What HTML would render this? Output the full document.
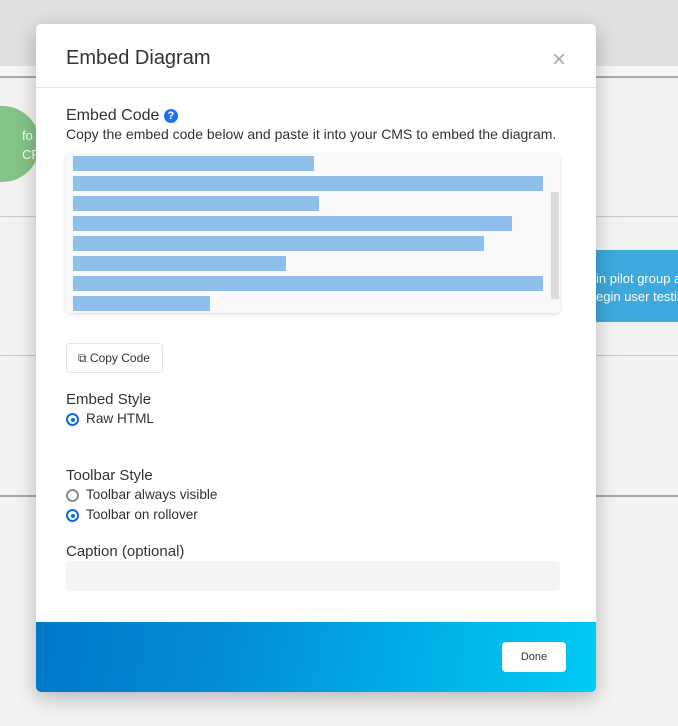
<!DOCTYPE html>
<html><head><style>
*{box-sizing:border-box;margin:0;padding:0}
body{width:678px;height:726px;overflow:hidden;background:#f3f3f3;font-family:"Liberation Sans",sans-serif;position:relative;color:#333}
.a{position:absolute}
.sel{position:absolute;left:73px;height:15px;background:#8fc0ec}
.radio{position:absolute;width:13px;height:13px;border-radius:50%;border:2px solid #0b6bde;left:66px}
.radio.on::after{content:"";position:absolute;left:2.5px;top:2.5px;width:4px;height:4px;border-radius:50%;background:#0b6bde}
.radio.off{border-color:#8c8c94}
.lbl{position:absolute;left:86px;font-size:13.6px;color:#333}
</style></head><body>
<div class="a" style="left:0;top:0;width:678px;height:66px;background:#e0e0e0"></div>
<div class="a" style="left:0;top:66px;width:678px;height:10px;background:#f6f6f6"></div>
<div class="a" style="left:0;top:76px;width:678px;height:2px;background:#a8a8a8"></div>
<div class="a" style="left:0;top:216px;width:678px;height:1px;background:#c8c8c8"></div>
<div class="a" style="left:0;top:355px;width:678px;height:1px;background:#c8c8c8"></div>
<div class="a" style="left:0;top:495px;width:678px;height:2px;background:#a8a8a8"></div>
<div class="a" style="left:-40px;top:106px;width:80px;height:76px;border-radius:38px;background:#84c487;color:#fff;font-size:13px;padding:20px 0 0 62px;line-height:19px">fo<br>CR</div>
<div class="a" style="left:560px;top:250px;width:130px;height:72px;background:#3da9dc;color:#fff;font-size:13px;padding:20px 0 0 36px;line-height:18px;white-space:nowrap">in pilot group a<br>egin user testin</div>

<div class="a" style="left:36px;top:24px;width:560px;height:668px;background:#fff;border-radius:5px;box-shadow:0 6px 20px rgba(0,0,0,.25);overflow:hidden">
 <div class="a" style="left:30px;top:23px;font-size:20px;color:#333">Embed Diagram</div>
 <div class="a" style="left:516px;top:22px;font-size:24px;color:#aaa;font-weight:300">×</div>
 <div class="a" style="left:0;top:63px;width:560px;height:1px;background:#e5e5e5"></div>
 <div class="a" style="left:30px;top:83px;font-size:16px">Embed Code <span style="display:inline-block;width:14px;height:14px;border-radius:50%;background:#1a73e8;color:#fff;font-size:11px;font-weight:bold;text-align:center;line-height:14px;vertical-align:1px">?</span></div>
 <div class="a" style="left:30px;top:102px;font-size:14px;white-space:nowrap">Copy the embed code below and paste it into your CMS to embed the diagram.</div>
 <div class="a" style="left:30px;top:130px;width:494px;height:159px;background:#f8f9fa;border-radius:4px;box-shadow:0 1px 4px rgba(0,0,0,.15)"></div>
 <div class="a" style="left:515px;top:168px;width:8px;height:107px;background:#dcdcdc"></div>
</div>
<div class="sel" style="top:156px;width:241px"></div>
<div class="sel" style="top:176px;width:470px"></div>
<div class="sel" style="top:196px;width:246px"></div>
<div class="sel" style="top:216px;width:439px"></div>
<div class="sel" style="top:236px;width:411px"></div>
<div class="sel" style="top:256px;width:213px"></div>
<div class="sel" style="top:276px;width:470px"></div>
<div class="sel" style="top:296px;width:137px"></div>

<div class="a" style="left:66px;top:343px;width:97px;height:30px;border:1px solid #e3e3e3;border-radius:4px;font-size:12px;color:#333;padding:7px 0 0 11px;white-space:nowrap">⧉ Copy Code</div>
<div class="a" style="left:66px;top:391px;font-size:15px">Embed Style</div>
<div class="radio on" style="top:413px"></div><div class="lbl" style="top:411px">Raw HTML</div>
<div class="a" style="left:66px;top:467px;font-size:15px">Toolbar Style</div>
<div class="radio off" style="top:489px"></div><div class="lbl" style="top:487px">Toolbar always visible</div>
<div class="radio on" style="top:509px"></div><div class="lbl" style="top:507px">Toolbar on rollover</div>
<div class="a" style="left:66px;top:543px;font-size:15px">Caption (optional)</div>
<div class="a" style="left:66px;top:561px;width:494px;height:30px;background:#f4f5f7;border-radius:4px"></div>
<div class="a" style="left:36px;top:622px;width:560px;height:70px;border-radius:0 0 5px 5px;background:linear-gradient(100deg,#0079c8 0%,#0389d2 30%,#00b1e8 70%,#00caf5 100%)"></div>
<div class="a" style="left:502px;top:642px;width:64px;height:30px;background:#fff;border-radius:4px;font-size:11px;color:#333;text-align:center;line-height:30px">Done</div>
</body></html>
